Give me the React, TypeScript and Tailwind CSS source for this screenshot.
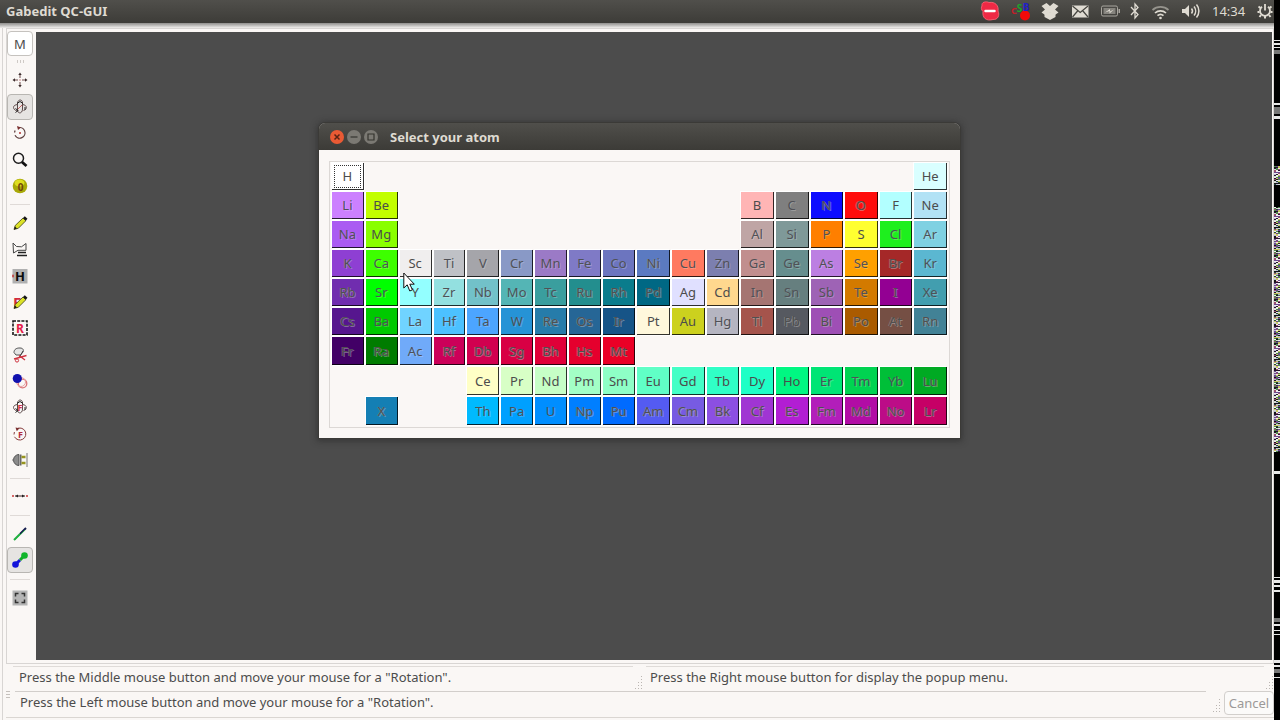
import React from 'react';

type Atom = { symbol: string; col: string; bg: string; tone?: 'light' | 'dark' };

const tones = {
    light: 'text-[#4c4c4c]',
    mid: 'text-[#505156] [text-shadow:1px_1px_0_#ffffff38]',
    dark: 'text-[#505050] [text-shadow:1px_1px_0_#c0c0c077,-1px_0_0_#a0a0a077]',
};

const rows: Atom[][] = [
    [
        { symbol: 'H', col: 'col-start-1', bg: 'bg-white', tone: 'light' },
        { symbol: 'He', col: 'col-start-18', bg: 'bg-[#d9ffff]', tone: 'light' },
    ],
    [
        { symbol: 'Li', col: 'col-start-1', bg: 'bg-[#cc80ff]' },
        { symbol: 'Be', col: 'col-start-2', bg: 'bg-[#c2ff00]', tone: 'light' },
        { symbol: 'B', col: 'col-start-13', bg: 'bg-[#ffb5b5]', tone: 'light' },
        { symbol: 'C', col: 'col-start-14', bg: 'bg-[#7f7f7f]' },
        { symbol: 'N', col: 'col-start-15', bg: 'bg-[#0c0cff]', tone: 'dark' },
        { symbol: 'O', col: 'col-start-16', bg: 'bg-[#ff0c0c]', tone: 'dark' },
        { symbol: 'F', col: 'col-start-17', bg: 'bg-[#b2ffff]', tone: 'light' },
        { symbol: 'Ne', col: 'col-start-18', bg: 'bg-[#b2e2f5]', tone: 'light' },
    ],
    [
        { symbol: 'Na', col: 'col-start-1', bg: 'bg-[#aa5bf2]' },
        { symbol: 'Mg', col: 'col-start-2', bg: 'bg-[#89ff00]', tone: 'light' },
        { symbol: 'Al', col: 'col-start-13', bg: 'bg-[#bfa5a5]' },
        { symbol: 'Si', col: 'col-start-14', bg: 'bg-[#7f9999]' },
        { symbol: 'P', col: 'col-start-15', bg: 'bg-[#ff7f00]' },
        { symbol: 'S', col: 'col-start-16', bg: 'bg-[#ffff30]', tone: 'light' },
        { symbol: 'Cl', col: 'col-start-17', bg: 'bg-[#1eef1e]' },
        { symbol: 'Ar', col: 'col-start-18', bg: 'bg-[#7fd1e2]' },
    ],
    [
        { symbol: 'K', col: 'col-start-1', bg: 'bg-[#8e3fd3]', tone: 'dark' },
        { symbol: 'Ca', col: 'col-start-2', bg: 'bg-[#3dff00]' },
        { symbol: 'Sc', col: 'col-start-3', bg: 'bg-[#f0eeee]', tone: 'light' },
        { symbol: 'Ti', col: 'col-start-4', bg: 'bg-[#bfc1c6]' },
        { symbol: 'V', col: 'col-start-5', bg: 'bg-[#a5a5aa]' },
        { symbol: 'Cr', col: 'col-start-6', bg: 'bg-[#8999c6]' },
        { symbol: 'Mn', col: 'col-start-7', bg: 'bg-[#9b7ac6]' },
        { symbol: 'Fe', col: 'col-start-8', bg: 'bg-[#7f7ac6]' },
        { symbol: 'Co', col: 'col-start-9', bg: 'bg-[#6c75bf]' },
        { symbol: 'Ni', col: 'col-start-10', bg: 'bg-[#5b7ac1]', tone: 'dark' },
        { symbol: 'Cu', col: 'col-start-11', bg: 'bg-[#ff7a60]' },
        { symbol: 'Zn', col: 'col-start-12', bg: 'bg-[#7c7faf]' },
        { symbol: 'Ga', col: 'col-start-13', bg: 'bg-[#c18e8e]' },
        { symbol: 'Ge', col: 'col-start-14', bg: 'bg-[#668e8e]' },
        { symbol: 'As', col: 'col-start-15', bg: 'bg-[#bc7fe2]' },
        { symbol: 'Se', col: 'col-start-16', bg: 'bg-[#ffa000]' },
        { symbol: 'Br', col: 'col-start-17', bg: 'bg-[#a52828]', tone: 'dark' },
        { symbol: 'Kr', col: 'col-start-18', bg: 'bg-[#5bb7d1]' },
    ],
    [
        { symbol: 'Rb', col: 'col-start-1', bg: 'bg-[#702daf]', tone: 'dark' },
        { symbol: 'Sr', col: 'col-start-2', bg: 'bg-[#00ff00]' },
        { symbol: 'Y', col: 'col-start-3', bg: 'bg-[#93ffff]', tone: 'light' },
        { symbol: 'Zr', col: 'col-start-4', bg: 'bg-[#93e0e0]' },
        { symbol: 'Nb', col: 'col-start-5', bg: 'bg-[#72c1c9]' },
        { symbol: 'Mo', col: 'col-start-6', bg: 'bg-[#54b5b5]' },
        { symbol: 'Tc', col: 'col-start-7', bg: 'bg-[#3a9e9e]' },
        { symbol: 'Ru', col: 'col-start-8', bg: 'bg-[#238e8e]', tone: 'dark' },
        { symbol: 'Rh', col: 'col-start-9', bg: 'bg-[#0a7c8c]', tone: 'dark' },
        { symbol: 'Pd', col: 'col-start-10', bg: 'bg-[#006884]', tone: 'dark' },
        { symbol: 'Ag', col: 'col-start-11', bg: 'bg-[#e0e0ff]', tone: 'light' },
        { symbol: 'Cd', col: 'col-start-12', bg: 'bg-[#ffd88e]', tone: 'light' },
        { symbol: 'In', col: 'col-start-13', bg: 'bg-[#a57572]' },
        { symbol: 'Sn', col: 'col-start-14', bg: 'bg-[#667f7f]' },
        { symbol: 'Sb', col: 'col-start-15', bg: 'bg-[#9e63b5]' },
        { symbol: 'Te', col: 'col-start-16', bg: 'bg-[#d37a00]' },
        { symbol: 'I', col: 'col-start-17', bg: 'bg-[#930093]', tone: 'dark' },
        { symbol: 'Xe', col: 'col-start-18', bg: 'bg-[#429eaf]' },
    ],
    [
        { symbol: 'Cs', col: 'col-start-1', bg: 'bg-[#56168e]', tone: 'dark' },
        { symbol: 'Ba', col: 'col-start-2', bg: 'bg-[#00c900]' },
        { symbol: 'La', col: 'col-start-3', bg: 'bg-[#70d3ff]' },
        { symbol: 'Hf', col: 'col-start-4', bg: 'bg-[#4cc1ff]' },
        { symbol: 'Ta', col: 'col-start-5', bg: 'bg-[#4ca5ff]' },
        { symbol: 'W', col: 'col-start-6', bg: 'bg-[#2693d6]' },
        { symbol: 'Re', col: 'col-start-7', bg: 'bg-[#267caa]', tone: 'dark' },
        { symbol: 'Os', col: 'col-start-8', bg: 'bg-[#266696]', tone: 'dark' },
        { symbol: 'Ir', col: 'col-start-9', bg: 'bg-[#165487]', tone: 'dark' },
        { symbol: 'Pt', col: 'col-start-10', bg: 'bg-[#fff8dc]', tone: 'light' },
        { symbol: 'Au', col: 'col-start-11', bg: 'bg-[#ccd11e]', tone: 'light' },
        { symbol: 'Hg', col: 'col-start-12', bg: 'bg-[#b5b5c1]' },
        { symbol: 'Tl', col: 'col-start-13', bg: 'bg-[#a5544c]', tone: 'dark' },
        { symbol: 'Pb', col: 'col-start-14', bg: 'bg-[#565960]', tone: 'dark' },
        { symbol: 'Bi', col: 'col-start-15', bg: 'bg-[#9e4fb5]', tone: 'dark' },
        { symbol: 'Po', col: 'col-start-16', bg: 'bg-[#aa5b00]', tone: 'dark' },
        { symbol: 'At', col: 'col-start-17', bg: 'bg-[#754f44]', tone: 'dark' },
        { symbol: 'Rn', col: 'col-start-18', bg: 'bg-[#428296]', tone: 'dark' },
    ],
    [
        { symbol: 'Fr', col: 'col-start-1', bg: 'bg-[#420066]', tone: 'dark' },
        { symbol: 'Ra', col: 'col-start-2', bg: 'bg-[#007c00]', tone: 'dark' },
        { symbol: 'Ac', col: 'col-start-3', bg: 'bg-[#70aaf9]' },
        { symbol: 'Rf', col: 'col-start-4', bg: 'bg-[#cc0059]', tone: 'dark' },
        { symbol: 'Db', col: 'col-start-5', bg: 'bg-[#d1004f]', tone: 'dark' },
        { symbol: 'Sg', col: 'col-start-6', bg: 'bg-[#d80044]', tone: 'dark' },
        { symbol: 'Bh', col: 'col-start-7', bg: 'bg-[#e00038]', tone: 'dark' },
        { symbol: 'Hs', col: 'col-start-8', bg: 'bg-[#e5002d]', tone: 'dark' },
        { symbol: 'Mt', col: 'col-start-9', bg: 'bg-[#ea0026]', tone: 'dark' },
    ],
    [
        { symbol: 'Ce', col: 'col-start-5', bg: 'bg-[#ffffc6]', tone: 'light' },
        { symbol: 'Pr', col: 'col-start-6', bg: 'bg-[#d8ffc6]', tone: 'light' },
        { symbol: 'Nd', col: 'col-start-7', bg: 'bg-[#c6ffc6]', tone: 'light' },
        { symbol: 'Pm', col: 'col-start-8', bg: 'bg-[#a3ffc6]', tone: 'light' },
        { symbol: 'Sm', col: 'col-start-9', bg: 'bg-[#8effc6]', tone: 'light' },
        { symbol: 'Eu', col: 'col-start-10', bg: 'bg-[#60ffc6]', tone: 'light' },
        { symbol: 'Gd', col: 'col-start-11', bg: 'bg-[#44ffc6]', tone: 'light' },
        { symbol: 'Tb', col: 'col-start-12', bg: 'bg-[#30ffc6]', tone: 'light' },
        { symbol: 'Dy', col: 'col-start-13', bg: 'bg-[#1effc6]', tone: 'light' },
        { symbol: 'Ho', col: 'col-start-14', bg: 'bg-[#00f782]', tone: 'light' },
        { symbol: 'Er', col: 'col-start-15', bg: 'bg-[#00e575]' },
        { symbol: 'Tm', col: 'col-start-16', bg: 'bg-[#00d351]' },
        { symbol: 'Yb', col: 'col-start-17', bg: 'bg-[#00bf38]' },
        { symbol: 'Lu', col: 'col-start-18', bg: 'bg-[#00aa23]', tone: 'dark' },
    ],
    [
        { symbol: 'X', col: 'col-start-2', bg: 'bg-[#147fb4]', tone: 'dark' },
        { symbol: 'Th', col: 'col-start-5', bg: 'bg-[#00baff]' },
        { symbol: 'Pa', col: 'col-start-6', bg: 'bg-[#00a0ff]' },
        { symbol: 'U', col: 'col-start-7', bg: 'bg-[#008eff]' },
        { symbol: 'Np', col: 'col-start-8', bg: 'bg-[#007fff]', tone: 'dark' },
        { symbol: 'Pu', col: 'col-start-9', bg: 'bg-[#006bff]', tone: 'dark' },
        { symbol: 'Am', col: 'col-start-10', bg: 'bg-[#545bf2]', tone: 'dark' },
        { symbol: 'Cm', col: 'col-start-11', bg: 'bg-[#775be2]', tone: 'dark' },
        { symbol: 'Bk', col: 'col-start-12', bg: 'bg-[#8c4fe2]', tone: 'dark' },
        { symbol: 'Cf', col: 'col-start-13', bg: 'bg-[#a035d3]', tone: 'dark' },
        { symbol: 'Es', col: 'col-start-14', bg: 'bg-[#b21ed3]', tone: 'dark' },
        { symbol: 'Fm', col: 'col-start-15', bg: 'bg-[#b21eba]', tone: 'dark' },
        { symbol: 'Md', col: 'col-start-16', bg: 'bg-[#b20ca5]', tone: 'dark' },
        { symbol: 'No', col: 'col-start-17', bg: 'bg-[#bc0c87]', tone: 'dark' },
        { symbol: 'Lr', col: 'col-start-18', bg: 'bg-[#c60066]', tone: 'dark' },
    ],
];

const rowStarts = [
    'row-start-1', 'row-start-2', 'row-start-3', 'row-start-4', 'row-start-5',
    'row-start-6', 'row-start-7', 'row-start-8', 'row-start-9',
];

const Icon: React.FC<{ children: React.ReactNode }> = ({ children }) => (
    <svg viewBox="0 0 16 16" className="h-4 w-4 overflow-visible" fill="none" aria-hidden="true">{children}</svg>
);

const Letter = ({ x = 8, y, size, fill, children }: { x?: number; y: number; size: number; fill: string; children: string }) => (
    <text x={x} y={y} fontSize={size} fontWeight="700" textAnchor="middle" fill={fill}>{children}</text>
);

const Orbit = ({ mark }: { mark?: boolean }) => (
    <>
        <path d="M5.500 5.500C1 6 .5 9 3 11c1 .8 2.500.8 3.500.5M10.500 5.500c5 .5 5 5 1 6" stroke="#5f4c4c" />
        <path d="M5.500 4C6 0 10.500 0 10.500 4v6c0 5-5 5-5 1z" stroke="#5b4a4a" />
        <path d="M5 4.500l3-2 3 2M3.500 9.500l2.500 2-2.500 2M13 8v3" stroke="#222" />
        {mark ? <Letter y={11.5} size={9} fill="#d03048">F</Letter> : <path d="M6 10l4-4" stroke="#c06060" />}
    </>
);

const viewTools = [
    { name: 'Move', art: <><path d="M8 2v4M8 10v4M2 8h4M10 8h4" stroke="#6b4848" /><path d="M8 .5L6.300 3h3.400zM8 15.500L6.300 13h3.400zM.5 8L3 6.300v3.400zM15.500 8L13 6.300v3.400z" fill="#3a2c2c" /><path d="M7.500 7.500h1v1h-1z" fill="#b02020" /></> },
    { name: 'Rotate', art: <Orbit />, active: true },
    { name: 'Rotate Z', art: <><path d="M6 2.800a5.300 5.300 0 1 1-3 7.500M2.500 7.500l.6-2" stroke="#5c3c3c" strokeWidth="1.200" /><path d="M5 1l4 1.500L6 5z" fill="#7a3030" /><circle cx="8" cy="8" r="1" fill="#b03030" /></> },
    { name: 'Zoom', art: <><circle cx="6.500" cy="6.300" r="5" stroke="#1d1d1d" strokeWidth="1.500" /><path d="M10 10l4.500 4" stroke="#111" strokeWidth="2.800" /></> },
    { name: 'Charge', art: <><circle cx="8" cy="8" r="7.300" fill="#a9a908" /><ellipse cx="7.500" cy="5" rx="5" ry="3.500" fill="#dede20" /><Letter x={8.5} y={12.5} size={10} fill="#71450c">0</Letter></> },
];

const Pencil = () => (
    <>
        <path d="M2 14.500l1.200-4L11 3l2.800 2.800-7.500 7.500z" fill="#dce227" stroke="#3b3b12" strokeWidth=".8" />
        <path d="M11 3l1.800-1.800 2.700 2.500-1.800 2zM2 14.500l1-3 2 2z" fill="#171717" />
    </>
);

const editTools = [
    { name: 'Draw', art: <Pencil /> },
    { name: 'Fragment', art: <><path d="M1 2l3.500 3.500 5 .3L14 2.500v6.800H6L1.500 12z" stroke="#454545" /><path d="M5 14.500h10M6 11.500h8" stroke="#222" strokeWidth="1.300" /></> },
    { name: 'Hydrogens', art: <><path d="M.5 1h15v14.500H.5z" fill="#b0b0b0" /><Letter y={13} size={13} fill="#0b0b0b">H</Letter><path d="M1 6.500v3M0 8h2" stroke="#c63434" /></> },
    { name: 'Edit fragment', art: <><Letter x={5} y={14} size={15} fill="#d22b3c">F</Letter><Pencil /></> },
    { name: 'Residue', art: <><path d="M1 1h14v14H1z" stroke="#141414" strokeWidth="1.600" strokeDasharray="3 1.200" /><Letter y={12.5} size={12} fill="#e51c49">R</Letter></> },
    { name: 'Cut', art: <><path d="M2 5.500C2 2 5 .8 8 1c3 0 4 2 3 4L8.500 8 4 8z" fill="#e4e4e4" stroke="#555" /><path d="M11 4l-4 7" stroke="#444" /><path d="M2 12l12.500-3.500M7 8.500l6 4.500" stroke="#ce3340" strokeWidth="1.300" /><circle cx="5" cy="13.500" r="1.600" stroke="#ce3340" /></> },
    { name: 'Move atom', art: <><circle cx="10.500" cy="10.500" r="4.300" stroke="#dc7478" strokeWidth="1.300" /><circle cx="9" cy="9" r="4.500" stroke="#e7a0a0" /><circle cx="5.300" cy="5.500" r="4.600" fill="#1111ae" /></> },
    { name: 'Rotate fragment', art: <Orbit mark /> },
    { name: 'Spin fragment', art: <><path d="M4.500 3a6 6 0 1 1-2 7.800M2 8.500l.4-2.500" stroke="#883c3c" /><path d="M3.500 1.500l4 .7-2.700 3z" fill="#7a3030" /><Letter x={8.5} y={11.5} size={9} fill="#b32b40">F</Letter></> },
    { name: 'Connect', art: <><path d="M7 2.500a5.500 5.500 0 0 0 0 11z" fill="#8b8b8b" stroke="#555" /><path d="M8 2.500h1.500v11H8z" fill="#696969" /><path d="M9.500 5h4M9.500 11h4" stroke="#96941e" strokeWidth="2.500" /><path d="M0 8h2M15 1v14" stroke="#777" /></> },
];

const Tool: React.FC<{ name: string; active?: boolean; children: React.ReactNode }> = ({ name, active, children }) => (
    <button
        type="button"
        aria-label={name}
        className={`flex h-[26px] w-[26px] shrink-0 items-center justify-center rounded border ${active ? 'border-[#b8b6b2] bg-[#e6e4e2]' : 'border-transparent'}`}
    >
        <Icon>{children}</Icon>
    </button>
);

const Separator = ({ className }: { className: string }) => (
    <div className={`flex w-5 shrink-0 items-center ${className}`}><div className="h-px w-full bg-[#dfdad7]" /></div>
);

const Toolbar = () => (
    <nav className="flex w-[29px] shrink-0 flex-col items-center pr-[3px] pt-[2px]">
        <button type="button" className="h-[25px] w-[26px] shrink-0 rounded border border-[#c5c2be] bg-white text-[13px] leading-[20px]">M</button>
        <div className="flex h-[11px] items-center gap-[2px]">
            <i className="h-[3px] w-px bg-[#cfcac6]" /><i className="h-[3px] w-px bg-[#cfcac6]" /><i className="h-[3px] w-px bg-[#cfcac6]" />
        </div>
        <div className="flex h-[132px] shrink-0 flex-col justify-between">
            {viewTools.map(t => <Tool key={t.name} name={t.name} active={t.active}>{t.art}</Tool>)}
        </div>
        <Separator className="h-[11px]" />
        <div className="flex h-[263px] shrink-0 flex-col justify-between">
            {editTools.map(t => <Tool key={t.name} name={t.name}>{t.art}</Tool>)}
        </div>
        <Separator className="h-[10px]" />
        <Tool name="Distance">
            <path d="M3 8h10" stroke="#3c2020" /><path d="M6 6.500L3.500 8 6 9.500zM10 6.500L12.500 8 10 9.500z" fill="#222" /><path d="M1 7v2M15 7v2" stroke="#ca3939" strokeWidth="1.500" />
        </Tool>
        <Separator className="h-[12px]" />
        <Tool name="Stick">
            <path d="M2 14l6-6" stroke="#22ae43" strokeWidth="2" /><path d="M8 8l6-6" stroke="#141c4c" strokeWidth="2" /><path d="M3 14l10-10" stroke="#28bd46" strokeWidth=".8" />
        </Tool>
        <Tool name="Ball and stick" active>
            <path d="M4 12l4-4" stroke="#1515da" strokeWidth="3" /><path d="M8 8l4-4" stroke="#12aa28" strokeWidth="3" /><circle cx="3.500" cy="12.500" r="3.300" fill="#1414da" /><circle cx="12.500" cy="3.500" r="3.300" fill="#10b52a" />
        </Tool>
        <Separator className="h-[12px]" />
        <Tool name="Full screen">
            <path d="M.5.5h15v15H.5z" fill="#b5b5b5" /><path d="M3.500 6.500v-3h3M9.500 3.500h3v3M12.500 9.500v3h-3M6.500 12.500h-3v-3" stroke="#333" strokeWidth="1.500" />
        </Tool>
    </nav>
);

const MenuBar = () => (
    <header className="flex h-[23px] shrink-0 items-center justify-between bg-linear-to-b from-[#504f4b] to-[#3d3c38] pb-px pl-[6px] pr-px text-[#dfdbd2]">
        <h1 className="text-[13px] font-bold leading-[20px]">Gabedit QC-GUI</h1>
        <div className="flex items-center gap-[10px]">
            <svg viewBox="0 0 20 20" className="h-5 w-5" aria-hidden="true">
                <path d="M2 5C1 1 6 0 9 1.500c6-1 10 3 9 8.500 2 4 0 9-5 8.500-7 2-11-2-10-8C1 9 1 6 2 5z" fill="#ef2945" stroke="#ff6778" strokeWidth=".8" />
                <path d="M5.500 10h9" stroke="#fff" strokeWidth="2.500" strokeLinecap="round" />
            </svg>
            <svg viewBox="0 0 20 20" className="h-5 w-5 overflow-visible" aria-hidden="true">
                <circle cx="15" cy="14.500" r="5" fill="#f20a0a" />
                <Letter x={4} y={13} size={9} fill="#c81e28">C</Letter>
                <Letter x={9.5} y={11} size={10} fill="#1ba52d">S</Letter>
                <Letter x={16} y={10} size={10} fill="#2020c8">B</Letter>
            </svg>
            <svg viewBox="0 0 20 20" className="h-5 w-5" fill="#dfdbd2" aria-hidden="true">
                <path d="M6.500 2L10 5l3.500-3L18.500 5 15 8.500l3.500 3-4.500 3-4-3-4 3-4.500-3L5 8.500 1.500 5z" /><path d="M4.500 13l5.500-2 5.500 2v3L10 19l-5.500-3z" />
            </svg>
            <svg viewBox="0 0 20 20" className="h-5 w-5" aria-hidden="true">
                <path d="M2 4.500h16.500v12H2z" fill="#dfdbd2" /><path d="M2.500 5l7.700 6.500L18 5M2.500 16l5.500-6.500M18 16l-5.500-6.500" stroke="#45443f" strokeWidth="1.200" fill="none" />
            </svg>
            <svg viewBox="0 0 20 20" className="h-5 w-5" fill="none" aria-hidden="true">
                <rect x="1.500" y="5" width="16" height="10" rx="1.500" stroke="#a9a69f" /><path d="M3.500 7h12v6h-12z" fill="#86847e" /><path d="M18.500 8h1.500v4h-1.500z" fill="#a9a69f" /><path d="M5 11.500l5-3.500v2.500l4-2-4.500 4V10z" fill="#dfdbd2" />
            </svg>
            <svg viewBox="0 0 10 20" className="h-5 w-[10px]" fill="none" stroke="#dfdbd2" strokeWidth="1.300" aria-hidden="true"><path d="M1 6l7 7.500L5 17V3l3 3.500L1 14" /></svg>
            <svg viewBox="0 0 22 20" className="h-5 w-[22px]" fill="none" stroke="#dfdbd2" strokeWidth="1.700" aria-hidden="true">
                <path d="M2.500 9a12 12 0 0 1 16 0" stroke="#96948d" /><path d="M5 12a8 8 0 0 1 11 0M7.500 14.700a4.500 4.500 0 0 1 6 0" /><circle cx="10.500" cy="17" r="1.300" fill="#dfdbd2" stroke="none" />
            </svg>
            <svg viewBox="0 0 20 20" className="h-5 w-5" fill="none" stroke="#dfdbd2" strokeWidth="1.500" aria-hidden="true">
                <path d="M0 8h3l4-4v12l-4-4H0z" fill="#dfdbd2" stroke="none" /><path d="M9.500 7.500a4 4 0 0 1 0 5M12 5.500a7 7 0 0 1 0 9M14.500 3.500a10 10 0 0 1 0 13" />
            </svg>
            <time className="w-[35px] text-[13px] leading-[20px]">14:34</time>
            <svg viewBox="0 0 16 16" className="h-4 w-4" fill="none" stroke="#dfdbd2" aria-hidden="true">
                <path d="M5 3.800a5 5 0 1 0 6 0M8 1v6.500" strokeWidth="1.800" /><path d="M3.500 5L1.500 3.500M2.500 9H.5M4 12l-1.500 2M8 13v2.500M12 12l1.500 2M13.500 9h2M12.500 5l2-1.500" strokeWidth="2" />
            </svg>
        </div>
    </header>
);

const AtomDialog = () => (
    <section role="dialog" aria-label="Select your atom" className="absolute left-[283px] top-[91px] rounded-t-md bg-[#faf7f5] shadow-[0_1px_6px_2px_#2228] outline outline-[#3b3a37]">
        <div className="flex h-[27px] items-center rounded-t-md bg-linear-to-b from-[#504f4b] to-[#3c3b37] pl-[11px]">
            <div className="flex gap-[3px]">
                <button type="button" aria-label="Close" className="h-[14px] w-[14px] rounded-full bg-[#ea5a34]">
                    <svg viewBox="0 0 14 14" stroke="#5a2314" strokeWidth="1.500" aria-hidden="true"><path d="M4.500 4.500l5 5M9.500 4.500l-5 5" /></svg>
                </button>
                <button type="button" aria-label="Minimize" className="h-[14px] w-[14px] rounded-full bg-[#7b7973]">
                    <svg viewBox="0 0 14 14" stroke="#35342f" strokeWidth="1.200" aria-hidden="true"><path d="M3.500 7h7" /></svg>
                </button>
                <button type="button" aria-label="Maximize" className="h-[14px] w-[14px] rounded-full bg-[#7b7973]">
                    <svg viewBox="0 0 14 14" stroke="#35342f" strokeWidth="1.200" fill="none" aria-hidden="true"><path d="M4 4h6v6H4z" /></svg>
                </button>
            </div>
            <h2 className="ml-[12px] text-[13px] font-bold leading-[20px] text-[#dfdbd2]">Select your atom</h2>
        </div>
        <div className="px-[10px] pb-[10px] pt-[11px]">
            <div className="grid w-[621px] grid-cols-[repeat(8,44fr)_repeat(10,45fr)] grid-rows-[repeat(6,29px)_repeat(3,30px)] border border-[#dcd8d5] pl-[2px] pt-px">
                {rows.map((row, r) => row.map(({ symbol, col, bg, tone }) => (
                    <button
                        key={symbol}
                        type="button"
                        className={`mb-[2px] mr-[2px] flex items-center justify-center border-b border-r border-b-black/80 border-r-black/80 text-[13px] leading-[20px] shadow-[-1px_-1px_0_#fff,1px_1px_0_#fff] ${rowStarts[r]} ${col} ${bg} ${tones[tone ?? 'mid']}`}
                    >
                        {symbol === 'H' ? <span className="w-[27px] border border-dotted border-[#333] leading-[21px]">H</span> : symbol}
                    </button>
                )))}
            </div>
        </div>
    </section>
);

const Grip = () => (
    <svg viewBox="0 0 10 16" className="h-4 w-[10px] shrink-0 self-end" fill="#bbb6b2" aria-hidden="true">
        <path d="M8 1h1v1H8zM8 4h1v1H8zM8 7h1v1H8zM5 7h1v1H5zM8 10h1v1H8zM5 10h1v1H5zM8 13h1v1H8zM5 13h1v1H5zM2 13h1v1H2z" />
    </svg>
);

const StatusBar = () => (
    <footer className="ml-[3px] shrink-0 text-[13px] leading-[20px]">
        <div className="flex h-[25px]">
            <p className="ml-[7px] flex-1 border-t border-[#dfdbd8] pl-[6px]">Press the Middle mouse button and move your mouse for a "Rotation".</p>
            <Grip />
            <p className="ml-[3px] flex-1 border-t border-[#dfdbd8] pl-[4px]">Press the Right mouse button for display the popup menu.</p>
            <Grip />
        </div>
        <div className="flex h-[27px] border-b border-[#dad6d2]">
            <svg viewBox="0 0 4 8" className="h-2 w-1" fill="#c5c0bc" aria-hidden="true"><path d="M0 0h4v1H0zM0 3h4v1H0zM0 6h4v1H0z" /></svg>
            <p className="ml-[5px] flex-1 border-t border-[#d2cecb] pl-[5px]">Press the Left mouse button and move your mouse for a "Rotation".</p>
            <div className="ml-[5px] mr-[3px] flex pb-[3px]"><Grip /></div>
            <button type="button" disabled className="h-[24px] w-[50px] rounded border border-[#d2cfcc] bg-[#fbfaf9] text-[#9b9998]">Cancel</button>
        </div>
    </footer>
);

const stripes = [
    [40, 1], [43, 2], [47, 1], [50, 4], [103, 2], [107, 7], [116, 3], [471, 3],
    [577, 1], [580, 3], [585, 2], [590, 2], [618, 4], [624, 2], [630, 1], [634, 1],
    [660, 3], [665, 2], [669, 4], [677, 1],
];
const speckles = ['#d5d9d3', '#6b4a8f', '#eef0ed', '#161616', '#4e8b4b', '#b8b5d5', '#23142c', '#f0e9ef', '#9c4f70', '#c8c65f', '#274738'];

// Torn framebuffer column at the right edge of the desktop
const EdgeNoise = () => (
    <svg viewBox="0 0 6 720" preserveAspectRatio="none" className="h-full w-[6px] shrink-0 bg-black" shapeRendering="crispEdges" aria-hidden="true">
        {stripes.map(([y, h]) => <rect key={y} y={y} width="6" height={h} fill={h > 3 ? '#777' : '#e8e8e8'} />)}
        {Array.from({ length: 286 }, (_, y) => y + 166).filter(y => y < 185 || y > 206).flatMap(y => (
            [0, 2, 4].map(x => <rect key={`${x}-${y}`} x={x} y={y} width="2" height="1" fill={speckles[(y * y * 7 + x * y * 3 + (y >> 2) + x) % speckles.length]} />)
        ))}
    </svg>
);

const App = () => (
    <div className="flex h-screen overflow-hidden bg-[#faf7f5] font-['Noto_Sans','Open_Sans',sans-serif] text-[#4c4c4c]">
        <div className="flex min-w-0 flex-1 flex-col">
            <MenuBar />
            <div className="h-[5px] shrink-0 bg-linear-to-b from-[#8f8e8c] to-[#f0eeec]" />
            <div className="ml-[2px] flex min-h-0 flex-1 flex-col border-l border-[#d8d5d3]">
                <div className="ml-[3px] flex min-h-0 flex-1 border border-[#d8d5d3]">
                    <Toolbar />
                    <main className="relative mb-[3px] mr-px mt-[3px] min-w-0 flex-1 bg-[#4c4c4c]">
                        <AtomDialog />
                        <svg viewBox="0 0 12 20" className="absolute left-[367px] top-[240px] h-5 w-3" aria-hidden="true">
                            <path d="M.8 1v15l3.400-3.200L6.800 19l2.600-1.200-2.600-5.600h4.500z" fill="#fff" stroke="#111" />
                        </svg>
                    </main>
                </div>
                <div className="h-[2px] shrink-0" />
                <StatusBar />
                <div className="h-[2px] shrink-0" />
            </div>
        </div>
        <EdgeNoise />
    </div>
);

export default App;
